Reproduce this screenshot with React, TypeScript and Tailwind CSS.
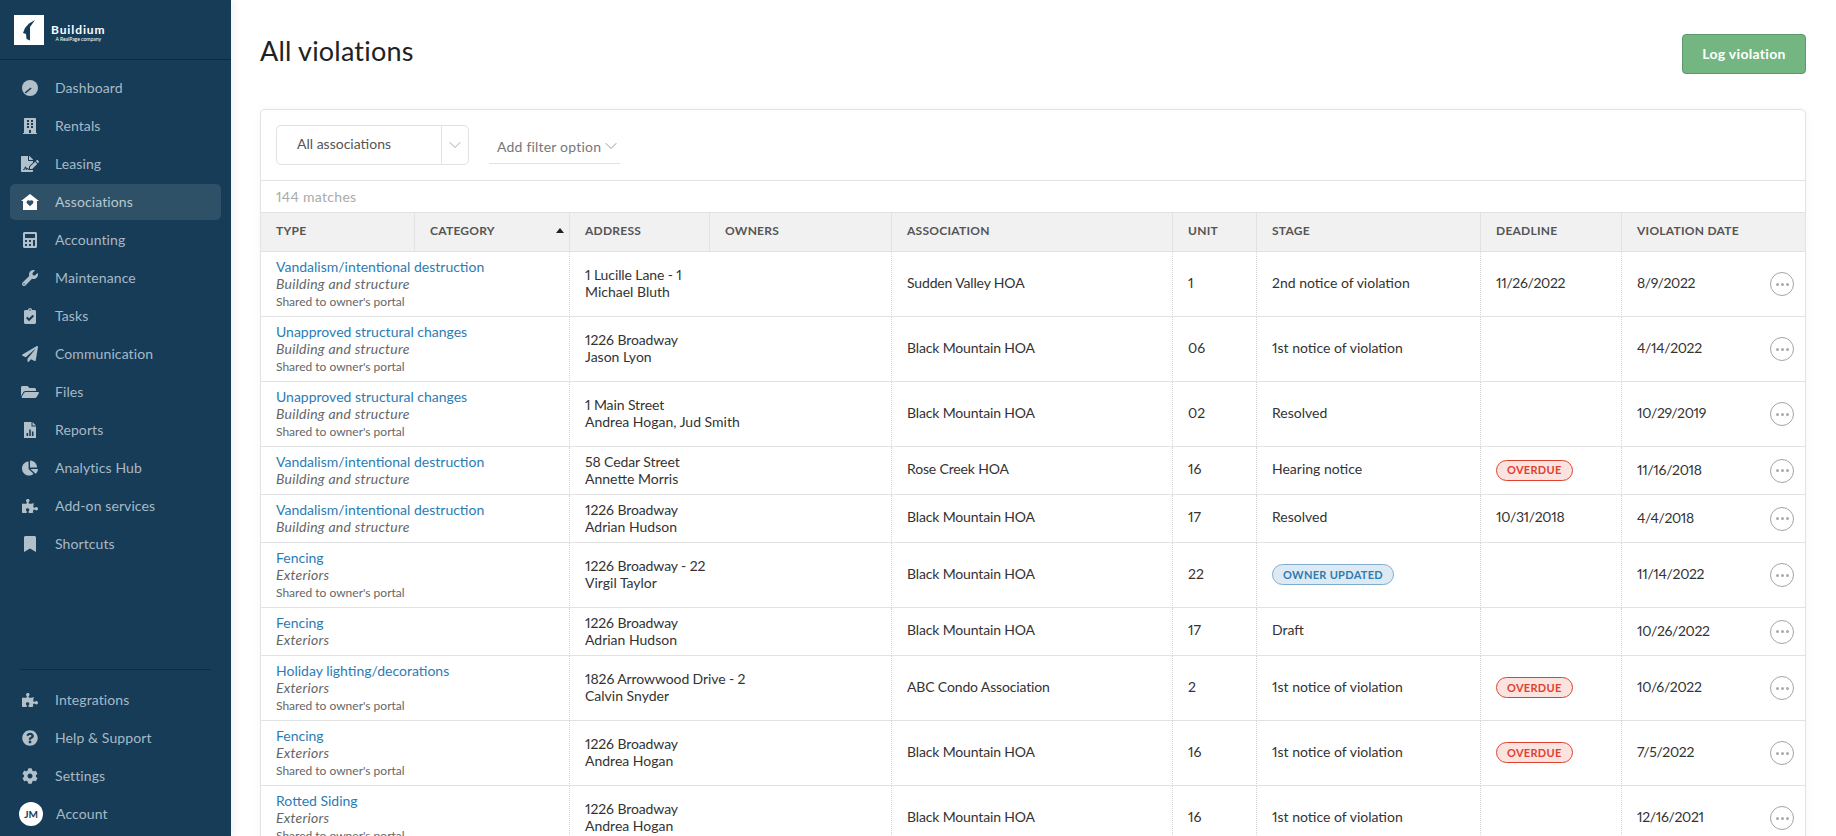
import type { ReactNode } from "react";
import {
  FaBookmark,
  FaBuilding,
  FaCalculator,
  FaChartPie,
  FaClipboardCheck,
  FaCog,
  FaFileSignature,
  FaFolderOpen,
  FaPaperPlane,
  FaPuzzlePiece,
  FaQuestionCircle,
  FaWrench,
} from "react-icons/fa";
import { ChevronDown } from "lucide-react";

function GaugeIcon() {
  return (
    <svg viewBox="0 0 16 16" className="w-4 h-4" fill="currentColor">
      <circle cx="8" cy="8" r="8" />
      <path d="M2.6 12.4 8.6 7.4l1 1-5.8 5.2z" fill="#163c58" />
    </svg>
  );
}

function HouseHeartIcon() {
  return (
    <svg viewBox="0 0 18 16" className="w-[18px] h-4" fill="currentColor">
      <path d="M9 0 18 7h-2v9H2V7H0z" />
      <path
        d="M9 12.2 5.9 9.2a1.9 1.9 0 0 1 2.7-2.6l.4.4.4-.4a1.9 1.9 0 0 1 2.7 2.6z"
        fill="#2f5168"
      />
    </svg>
  );
}

function ReportIcon() {
  return (
    <svg viewBox="0 0 12 16" className="w-3 h-4" fill="currentColor">
      <path d="M0 0h7.5v4.5H12V16H0z" />
      <path d="M8.5 0 12 3.5H8.5z" />
      <path d="M2.5 11h1.6v3H2.5zM5.2 7.5h1.6V14H5.2zM7.9 9.5h1.6V14H7.9z" fill="#163c58" />
    </svg>
  );
}

interface NavItemProps {
  icon: ReactNode;
  label: string;
  active?: boolean;
}

function NavItem({ icon, label, active }: NavItemProps) {
  return (
    <div
      className={`flex items-center h-9 mx-[10px] pl-2 rounded-[5px] ${
        active ? "bg-[#2f5168] text-[#b9c7d1]" : "text-[#a8b9c5]"
      }`}
    >
      <span
        className={`flex items-center justify-center w-6 text-base ${
          active ? "text-white" : "text-[#b2c0ca]"
        }`}
      >
        {icon}
      </span>
      <span className="ml-[13px] pb-[1px] text-[14px] tracking-[0.1px]">{label}</span>
    </div>
  );
}

function Sidebar() {
  return (
    <aside className="flex flex-col w-[231px] h-full shrink-0 bg-[#163c58] shadow-[3px_0_8px_rgba(0,0,0,0.06)] z-10">
      <div className="flex items-center h-[60px] pl-[14px] border-b border-[#0f2c42]">
        <div className="flex items-center justify-center w-[30px] h-[30px] bg-white">
          <svg viewBox="0 0 30 30" className="w-[30px] h-[30px]" fill="#163c58">
            <path d="M21 5 15 8.5 11 13 9 18l3 1 .5 5 3.5 1.5V12z" />
          </svg>
        </div>
        <div className="flex flex-col items-center ml-[7px] mt-[7px] text-white">
          <span className="text-[12px] font-bold leading-[13px] tracking-[0.9px]">Buildium</span>
          <span className="text-[5px] leading-[7px]">A RealPage company</span>
        </div>
      </div>
      <nav className="flex flex-col gap-[2px] pt-[10px]">
        <NavItem icon={<GaugeIcon />} label="Dashboard" />
        <NavItem icon={<FaBuilding />} label="Rentals" />
        <NavItem icon={<FaFileSignature className="text-lg" />} label="Leasing" />
        <NavItem icon={<HouseHeartIcon />} label="Associations" active />
        <NavItem icon={<FaCalculator />} label="Accounting" />
        <NavItem icon={<FaWrench />} label="Maintenance" />
        <NavItem icon={<FaClipboardCheck />} label="Tasks" />
        <NavItem icon={<FaPaperPlane />} label="Communication" />
        <NavItem icon={<FaFolderOpen className="text-lg" />} label="Files" />
        <NavItem icon={<ReportIcon />} label="Reports" />
        <NavItem icon={<FaChartPie />} label="Analytics Hub" />
        <NavItem icon={<FaPuzzlePiece />} label="Add-on services" />
        <NavItem icon={<FaBookmark />} label="Shortcuts" />
      </nav>
      <div className="flex flex-col gap-[2px] mt-auto pb-1">
        <div className="mx-5 mb-[10px] border-t border-[#0f2c42]" />
        <NavItem icon={<FaPuzzlePiece />} label="Integrations" />
        <NavItem icon={<FaQuestionCircle />} label="Help & Support" />
        <NavItem icon={<FaCog />} label="Settings" />
        <div className="flex items-center h-9 ml-[19px] text-[#a8b9c5]">
          <span className="flex items-center justify-center w-6 h-6 rounded-full bg-white text-[#163c58] text-[10px] font-bold">
            JM
          </span>
          <span className="ml-[13px] pb-[1px] text-[14px] tracking-[0.1px]">Account</span>
        </div>
      </div>
    </aside>
  );
}

type Row = {
  type: string;
  category: string;
  shared: boolean;
  address: string;
  owners: string;
  association: string;
  unit: string;
  stage?: string;
  ownerUpdated?: boolean;
  deadline?: string;
  overdue?: boolean;
  date: string;
};

const rows: Row[] = [
  { type: "Vandalism/intentional destruction", category: "Building and structure", shared: true, address: "1 Lucille Lane - 1", owners: "Michael Bluth", association: "Sudden Valley HOA", unit: "1", stage: "2nd notice of violation", deadline: "11/26/2022", date: "8/9/2022" },
  { type: "Unapproved structural changes", category: "Building and structure", shared: true, address: "1226 Broadway", owners: "Jason Lyon", association: "Black Mountain HOA", unit: "06", stage: "1st notice of violation", date: "4/14/2022" },
  { type: "Unapproved structural changes", category: "Building and structure", shared: true, address: "1 Main Street", owners: "Andrea Hogan, Jud Smith", association: "Black Mountain HOA", unit: "02", stage: "Resolved", date: "10/29/2019" },
  { type: "Vandalism/intentional destruction", category: "Building and structure", shared: false, address: "58 Cedar Street", owners: "Annette Morris", association: "Rose Creek HOA", unit: "16", stage: "Hearing notice", overdue: true, date: "11/16/2018" },
  { type: "Vandalism/intentional destruction", category: "Building and structure", shared: false, address: "1226 Broadway", owners: "Adrian Hudson", association: "Black Mountain HOA", unit: "17", stage: "Resolved", deadline: "10/31/2018", date: "4/4/2018" },
  { type: "Fencing", category: "Exteriors", shared: true, address: "1226 Broadway - 22", owners: "Virgil Taylor", association: "Black Mountain HOA", unit: "22", ownerUpdated: true, date: "11/14/2022" },
  { type: "Fencing", category: "Exteriors", shared: false, address: "1226 Broadway", owners: "Adrian Hudson", association: "Black Mountain HOA", unit: "17", stage: "Draft", date: "10/26/2022" },
  { type: "Holiday lighting/decorations", category: "Exteriors", shared: true, address: "1826 Arrowwood Drive - 2", owners: "Calvin Snyder", association: "ABC Condo Association", unit: "2", stage: "1st notice of violation", overdue: true, date: "10/6/2022" },
  { type: "Fencing", category: "Exteriors", shared: true, address: "1226 Broadway", owners: "Andrea Hogan", association: "Black Mountain HOA", unit: "16", stage: "1st notice of violation", overdue: true, date: "7/5/2022" },
  { type: "Rotted Siding", category: "Exteriors", shared: true, address: "1226 Broadway", owners: "Andrea Hogan", association: "Black Mountain HOA", unit: "16", stage: "1st notice of violation", date: "12/16/2021" },
];

const th = "h-[39px] px-[15px] pb-[2px] text-left text-[12px] font-bold tracking-[0.25px] text-[#555] bg-[#f1f1f1] border-b border-l border-[#e2e2e2] relative";
const cell = "px-[15px] border-b border-b-[#e2e2e2] border-l border-l-[#d4d4d4] [border-left-style:dotted]";

function ViolationRow({ row }: { row: Row }) {
  return (
    <tr className={row.shared ? "h-[65px]" : "h-[48px]"}>
      <td colSpan={2} className={`px-[15px] border-b border-[#e2e2e2] align-middle ${row.shared ? "pt-[2px]" : "pb-[2px]"}`}>
        <div className="leading-[17px] text-[#2c7cb3]">{row.type}</div>
        <div className="leading-[17px] italic text-[#666] tracking-[0.25px]">{row.category}</div>
        {row.shared && (
          <div className="leading-[20px] text-[12px] text-[#666]">Shared to owner's portal</div>
        )}
      </td>
      <td colSpan={2} className={`${cell} pb-[2px] leading-[17px]`}>
        <div className="tracking-[-0.1px]">{row.address}</div>
        <div>{row.owners}</div>
      </td>
      <td className={`${cell} pb-[4px] tracking-[-0.15px]`}>{row.association}</td>
      <td className={`${cell} pb-[4px]`}>{row.unit}</td>
      <td className={`${cell} pb-[4px]`}>
        {row.ownerUpdated ? (
          <span className="inline-flex items-center h-[21px] px-[10px] translate-y-[1px] rounded-full border border-[#7fadd0] bg-[#deeaf3] text-[#2c7cb3] text-[11px] font-bold tracking-[0.3px]">
            OWNER UPDATED
          </span>
        ) : (
          row.stage
        )}
      </td>
      <td className={`${cell} pb-[4px]`}>
        {row.overdue ? (
          <span className="inline-flex items-center h-[21px] px-[10px] translate-y-[1px] rounded-full border border-[#e0412f] bg-[#fbe3e0] text-[#e0412f] text-[11px] font-bold tracking-[0.3px]">
            OVERDUE
          </span>
        ) : (
          <span className="tracking-[-0.35px]">{row.deadline}</span>
        )}
      </td>
      <td className={`${cell} !pr-[11px]`}>
        <div className="flex items-center justify-between">
          <span className="pb-[3px] tracking-[-0.35px]">{row.date}</span>
          <span className="flex items-center justify-center gap-[2px] w-6 h-6 rounded-full border border-[#a5a5a5]">
            <i className="w-[3px] h-[3px] rounded-full bg-[#aaa]" />
            <i className="w-[3px] h-[3px] rounded-full bg-[#aaa]" />
            <i className="w-[3px] h-[3px] rounded-full bg-[#aaa]" />
          </span>
        </div>
      </td>
    </tr>
  );
}

export default function App() {
  return (
    <div className="flex h-screen overflow-hidden bg-white font-['Lato',sans-serif] text-[14px] text-[#333] proportional-nums">
      <Sidebar />
      <main className="flex-1 min-w-0 pl-[29px] pr-[30px]">
        <div className="flex items-start justify-between pt-[33px] h-[109px]">
          <h1 className="text-[27px] leading-9 tracking-[0.2px] text-[#222]">All violations</h1>
          <button className="w-[124px] h-10 mt-[1px] pb-[1px] rounded-[4px] border border-[#5d9a6a] bg-[#73b681] text-white text-[14px] font-bold tracking-[0.3px]">
            Log violation
          </button>
        </div>
        <section className="border border-[#e2e2e2] rounded-t-[5px] shadow-[0_0_8px_rgba(0,0,0,0.04)]">
          <div className="flex items-start h-[71px] pt-[15px] pl-[15px] border-b border-[#e2e2e2]">
            <div className="flex w-[193px] h-10 rounded-[5px] border border-[#e2e2e2]">
              <span className="flex-1 pl-[20px] pt-[7px] text-[#555]">All associations</span>
              <span className="flex items-center justify-center w-[27px] border-l border-[#e2e2e2]">
                <ChevronDown className="w-5 h-5 text-[#999]" strokeWidth={1} />
              </span>
            </div>
            <div className="flex items-center w-[131px] h-[35px] ml-5 mt-1 pl-2 border-b border-[#e2e2e2] text-[#777] tracking-[0.2px] whitespace-nowrap">
              Add filter option
              <ChevronDown className="w-5 h-5 shrink-0 text-[#888]" strokeWidth={1} />
            </div>
          </div>
          <div className="flex items-center h-[32px] pl-[15px] border-b border-[#e2e2e2] text-[#aaa] tracking-[0.3px]">
            144 matches
          </div>
          <table className="w-full table-fixed border-separate border-spacing-0">
            <colgroup>
              <col className="w-[153px]" />
              <col className="w-[155px]" />
              <col className="w-[140px]" />
              <col className="w-[182px]" />
              <col className="w-[281px]" />
              <col className="w-[84px]" />
              <col className="w-[224px]" />
              <col className="w-[141px]" />
              <col className="w-[184px]" />
            </colgroup>
            <thead>
              <tr>
                <th className={`${th} border-l-0`}>TYPE</th>
                <th className={th}>
                  CATEGORY
                  <span className="absolute right-[5px] top-[15px] w-0 h-0 border-x-[4px] border-b-[5px] border-x-transparent border-b-[#222]" />
                </th>
                <th className={th}>ADDRESS</th>
                <th className={th}>OWNERS</th>
                <th className={th}>ASSOCIATION</th>
                <th className={th}>UNIT</th>
                <th className={th}>STAGE</th>
                <th className={th}>DEADLINE</th>
                <th className={th}>VIOLATION DATE</th>
              </tr>
            </thead>
            <tbody>
              {rows.map((row, i) => (
                <ViolationRow key={i} row={row} />
              ))}
            </tbody>
          </table>
        </section>
      </main>
    </div>
  );
}
